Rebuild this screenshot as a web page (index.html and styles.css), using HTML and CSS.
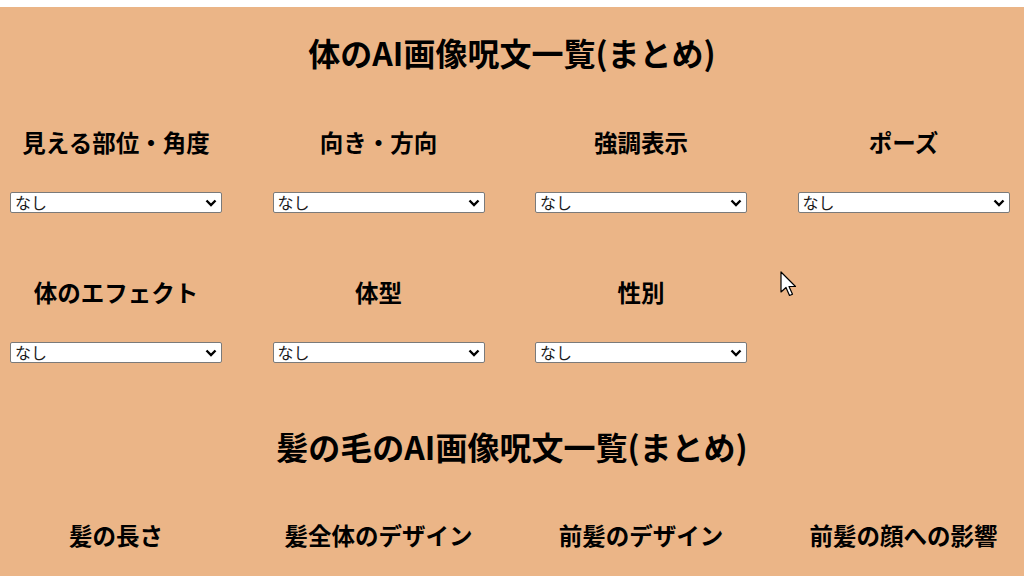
FILE: index.html
```html
<!DOCTYPE html>
<html lang="ja">
<head>
<meta charset="utf-8">
<title>体のAI画像呪文一覧(まとめ)</title>
<link rel="stylesheet" href="styles.css">
</head>
<body>
<div class="page">
  <section class="section">
    <h1 class="title">体のAI画像呪文一覧(まとめ)</h1>
    <div class="grid">
      <div class="item"><h2 class="label">見える部位・角度</h2><div class="selwrap"><select class="sel"><option>なし</option></select><svg class="chev" width="12" height="8" viewBox="0 0 12 8"><path d="M1.5 1.5 L6 6 L10.5 1.5" fill="none" stroke="#000" stroke-width="2.4"/></svg></div></div>
      <div class="item"><h2 class="label">向き・方向</h2><div class="selwrap"><select class="sel"><option>なし</option></select><svg class="chev" width="12" height="8" viewBox="0 0 12 8"><path d="M1.5 1.5 L6 6 L10.5 1.5" fill="none" stroke="#000" stroke-width="2.4"/></svg></div></div>
      <div class="item"><h2 class="label">強調表示</h2><div class="selwrap"><select class="sel"><option>なし</option></select><svg class="chev" width="12" height="8" viewBox="0 0 12 8"><path d="M1.5 1.5 L6 6 L10.5 1.5" fill="none" stroke="#000" stroke-width="2.4"/></svg></div></div>
      <div class="item"><h2 class="label">ポーズ</h2><div class="selwrap"><select class="sel"><option>なし</option></select><svg class="chev" width="12" height="8" viewBox="0 0 12 8"><path d="M1.5 1.5 L6 6 L10.5 1.5" fill="none" stroke="#000" stroke-width="2.4"/></svg></div></div>
      <div class="item"><h2 class="label">体のエフェクト</h2><div class="selwrap"><select class="sel"><option>なし</option></select><svg class="chev" width="12" height="8" viewBox="0 0 12 8"><path d="M1.5 1.5 L6 6 L10.5 1.5" fill="none" stroke="#000" stroke-width="2.4"/></svg></div></div>
      <div class="item"><h2 class="label">体型</h2><div class="selwrap"><select class="sel"><option>なし</option></select><svg class="chev" width="12" height="8" viewBox="0 0 12 8"><path d="M1.5 1.5 L6 6 L10.5 1.5" fill="none" stroke="#000" stroke-width="2.4"/></svg></div></div>
      <div class="item"><h2 class="label">性別</h2><div class="selwrap"><select class="sel"><option>なし</option></select><svg class="chev" width="12" height="8" viewBox="0 0 12 8"><path d="M1.5 1.5 L6 6 L10.5 1.5" fill="none" stroke="#000" stroke-width="2.4"/></svg></div></div>
    </div>
  </section>
  <section class="section">
    <h1 class="title">髪の毛のAI画像呪文一覧(まとめ)</h1>
    <div class="grid">
      <div class="item"><h2 class="label">髪の長さ</h2><div class="selwrap"><select class="sel"><option>なし</option></select><svg class="chev" width="12" height="8" viewBox="0 0 12 8"><path d="M1.5 1.5 L6 6 L10.5 1.5" fill="none" stroke="#000" stroke-width="2.4"/></svg></div></div>
      <div class="item"><h2 class="label">髪全体のデザイン</h2><div class="selwrap"><select class="sel"><option>なし</option></select><svg class="chev" width="12" height="8" viewBox="0 0 12 8"><path d="M1.5 1.5 L6 6 L10.5 1.5" fill="none" stroke="#000" stroke-width="2.4"/></svg></div></div>
      <div class="item"><h2 class="label">前髪のデザイン</h2><div class="selwrap"><select class="sel"><option>なし</option></select><svg class="chev" width="12" height="8" viewBox="0 0 12 8"><path d="M1.5 1.5 L6 6 L10.5 1.5" fill="none" stroke="#000" stroke-width="2.4"/></svg></div></div>
      <div class="item"><h2 class="label">前髪の顔への影響</h2><div class="selwrap"><select class="sel"><option>なし</option></select><svg class="chev" width="12" height="8" viewBox="0 0 12 8"><path d="M1.5 1.5 L6 6 L10.5 1.5" fill="none" stroke="#000" stroke-width="2.4"/></svg></div></div>
    </div>
  </section>
  <svg class="cursor" width="20" height="28" viewBox="0 0 20 28"><path d="M1 1 L1 21 L6 16.5 L9.5 24.5 L12.5 23.2 L9 15.5 L15.5 15.5 Z" fill="#fff" stroke="#000" stroke-width="1.2" stroke-linejoin="round"/></svg>
</div>
</body>
</html>
```
FILE: styles.css
```css
html, body {
  margin: 0;
  padding: 0;
  background: #ffffff;
  overflow: hidden;
}
body {
  font-family: "Noto Sans CJK JP", "Noto Sans", sans-serif;
  color: #000;
}
.page {
  position: relative;
  margin-top: 7px;
  background: #ebb587;
  padding-top: 24px;
  min-height: 600px;
}
.section + .section {
  margin-top: 62px;
}
.title {
  margin: 0 0 53px;
  font-size: 32px;
  line-height: 42px;
  font-weight: 700;
  text-align: center;
}
.section + .section .title {
  margin-bottom: 52px;
}
.grid {
  display: grid;
  grid-template-columns: repeat(4, 262.5px);
  row-gap: 63px;
}
.item {
  display: flex;
  flex-direction: column;
  align-items: flex-start;
  padding-left: 10px;
  gap: 34px;
}
.label {
  margin: 0;
  width: 212px;
  text-align: center;
  font-size: 23.5px;
  line-height: 32px;
  font-weight: 700;
  white-space: nowrap;
}
.selwrap {
  position: relative;
  width: 212px;
  height: 21px;
}
.sel {
  -webkit-appearance: none;
  -moz-appearance: none;
  appearance: none;
  display: block;
  box-sizing: border-box;
  width: 212px;
  height: 21px;
  margin: 0;
  font-family: "Noto Sans CJK JP", sans-serif;
  font-size: 16px;
  line-height: 19px;
  background-color: #fff;
  border: 1px solid #7a7a7a;
  border-radius: 2px;
  padding: 0 0 0 4px;
  color: #1a1a1a;
}
.chev {
  position: absolute;
  right: 5px;
  top: 7px;
  pointer-events: none;
}
.cursor {
  position: absolute;
  left: 780px;
  top: 264px;
}
```
